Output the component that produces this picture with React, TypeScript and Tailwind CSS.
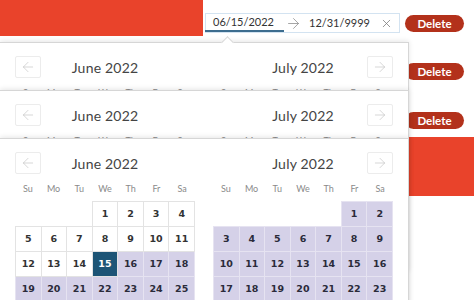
import { ArrowLeft, ArrowRight, X } from 'lucide-react';

const FONT = { fontFamily: 'Lato, "Open Sans", sans-serif' };
const WEEKDAYS = ['Su', 'Mo', 'Tu', 'We', 'Th', 'Fr', 'Sa'];

type Cell = number | null;

const weeks = (offset: number, days: number): Cell[][] => {
    const cells: Cell[] = Array(offset).fill(null);
    for (let d = 1; d <= days; d++) cells.push(d);
    while (cells.length % 7) cells.push(null);
    const rows: Cell[][] = [];
    for (let i = 0; i < cells.length; i += 7) rows.push(cells.slice(i, i + 7));
    return rows;
};

const JUNE = weeks(3, 30);
const JULY = weeks(5, 31);

const DayCell = ({ day, month }: { day: Cell; month: 'june' | 'july' }) => {
    if (day === null) return <td className="p-0" />;
    const selected = month === 'june' && day === 15;
    const inRange = month === 'july' || day > 15;
    let cls = 'bg-white text-[#333] border-[#e3e3e3]';
    if (selected) cls = 'bg-[#1d5576] text-white border-[#e3e3e3]';
    else if (inRange) cls = 'bg-[#d5d1e8] text-[#2b2b3a] border-[#e6e3f1]';
    return (
        <td
            className={`p-0 h-[25px] border text-center align-middle text-[9.5px] font-bold ${cls}`}
            style={{ fontFamily: '"DejaVu Sans", Verdana, sans-serif' }}
        >
            {day}
        </td>
    );
};

const NavButton = ({ dir }: { dir: 'prev' | 'next' }) => (
    <div className="w-[26px] h-[22px] border border-[#ececec] rounded-[2px] flex items-center justify-center">
        {dir === 'prev' ? (
            <ArrowLeft className="w-[16px] h-[16px] text-[#c2c2c2]" strokeWidth={1} />
        ) : (
            <ArrowRight className="w-[16px] h-[16px] text-[#c2c2c2]" strokeWidth={1} />
        )}
    </div>
);

const Month = ({ title, month, rows }: { title: string; month: 'june' | 'july'; rows: Cell[][] }) => (
    <div className="w-[180px]">
        <div className="grid grid-cols-[26px_1fr_26px] h-[22px] items-center">
            {month === 'june' ? <NavButton dir="prev" /> : <div />}
            <div className="text-center text-[14px] text-[#444] tracking-[0.2px]">{title}</div>
            {month === 'july' ? <NavButton dir="next" /> : <div />}
        </div>
        <div className="grid grid-cols-7 mt-[8px] h-[12px] items-center">
            {WEEKDAYS.map(w => (
                <div key={w} className="text-center text-[9px] text-[#8a8a8a] leading-none">
                    {w}
                </div>
            ))}
        </div>
        <table className="mt-[7px] w-[180px] table-fixed border-collapse">
            <tbody>
                {rows.map((row, i) => (
                    <tr key={i}>
                        {row.map((d, j) => (
                            <DayCell key={j} day={d} month={month} />
                        ))}
                    </tr>
                ))}
            </tbody>
        </table>
    </div>
);

const Popup = ({ className, notch }: { className: string; notch?: boolean }) => (
    <div
        className={`absolute left-0 w-[409px] h-[230px] bg-white border-t border-r border-[#d6d6d6] shadow-[0_-1px_5px_rgba(0,0,0,0.10)] px-[15px] pt-[13px] flex gap-[18px] ${className}`}
    >
        {notch && (
            <div className="absolute top-[-5px] left-[223px] w-[9px] h-[9px] bg-white border-t border-l border-[#d6d6d6] rotate-45" />
        )}
        <Month title="June 2022" month="june" rows={JUNE} />
        <Month title="July 2022" month="july" rows={JULY} />
    </div>
);

const DeleteButton = () => (
    <button className="w-[59px] h-[17px] rounded-full bg-[#b3311b] text-white text-[11.5px] font-bold leading-none flex items-center justify-center">
        Delete
    </button>
);

export default function App() {
    return (
        <div className="relative w-[474px] h-[300px] overflow-hidden bg-white" style={FONT}>
            {/* row 1 */}
            <div className="flex h-[48px]">
                <div className="w-[203px] h-[36px] bg-[#e9432b]" />
                <div className="ml-[2px] mt-[13px] w-[195px] h-[20px] border border-[#d3e3f1] bg-white flex items-stretch">
                    <div className="w-[79px] -ml-px border-b-2 border-[#3d6d8f] pl-[8px] flex items-center text-[11px] text-[#333]">
                        06/15/2022
                    </div>
                    <div className="flex items-center pl-[1px]">
                        <ArrowRight className="w-[17px] h-[17px] text-[#8c8c8c]" strokeWidth={1.1} />
                    </div>
                    <div className="pl-[7px] flex items-center text-[11px] text-[#333]">12/31/9999</div>
                    <div className="ml-auto pr-[6px] flex items-center">
                        <X className="w-[13px] h-[13px] text-[#777]" strokeWidth={1.4} />
                    </div>
                </div>
                <div className="ml-[5px] mt-[15px]">
                    <DeleteButton />
                </div>
            </div>
            {/* row 2 */}
            <div className="flex h-[49px] pt-[15px] pl-[405px]">
                <DeleteButton />
            </div>
            {/* row 3 */}
            <div className="flex h-[40px] pt-[15px] pl-[405px]">
                <DeleteButton />
            </div>
            {/* row 4 */}
            <div className="h-[59px] bg-[#e9432b]" />

            <Popup className="top-[42px]" notch />
            <Popup className="top-[90px]" />
            <Popup className="top-[138px]" />
        </div>
    );
}
